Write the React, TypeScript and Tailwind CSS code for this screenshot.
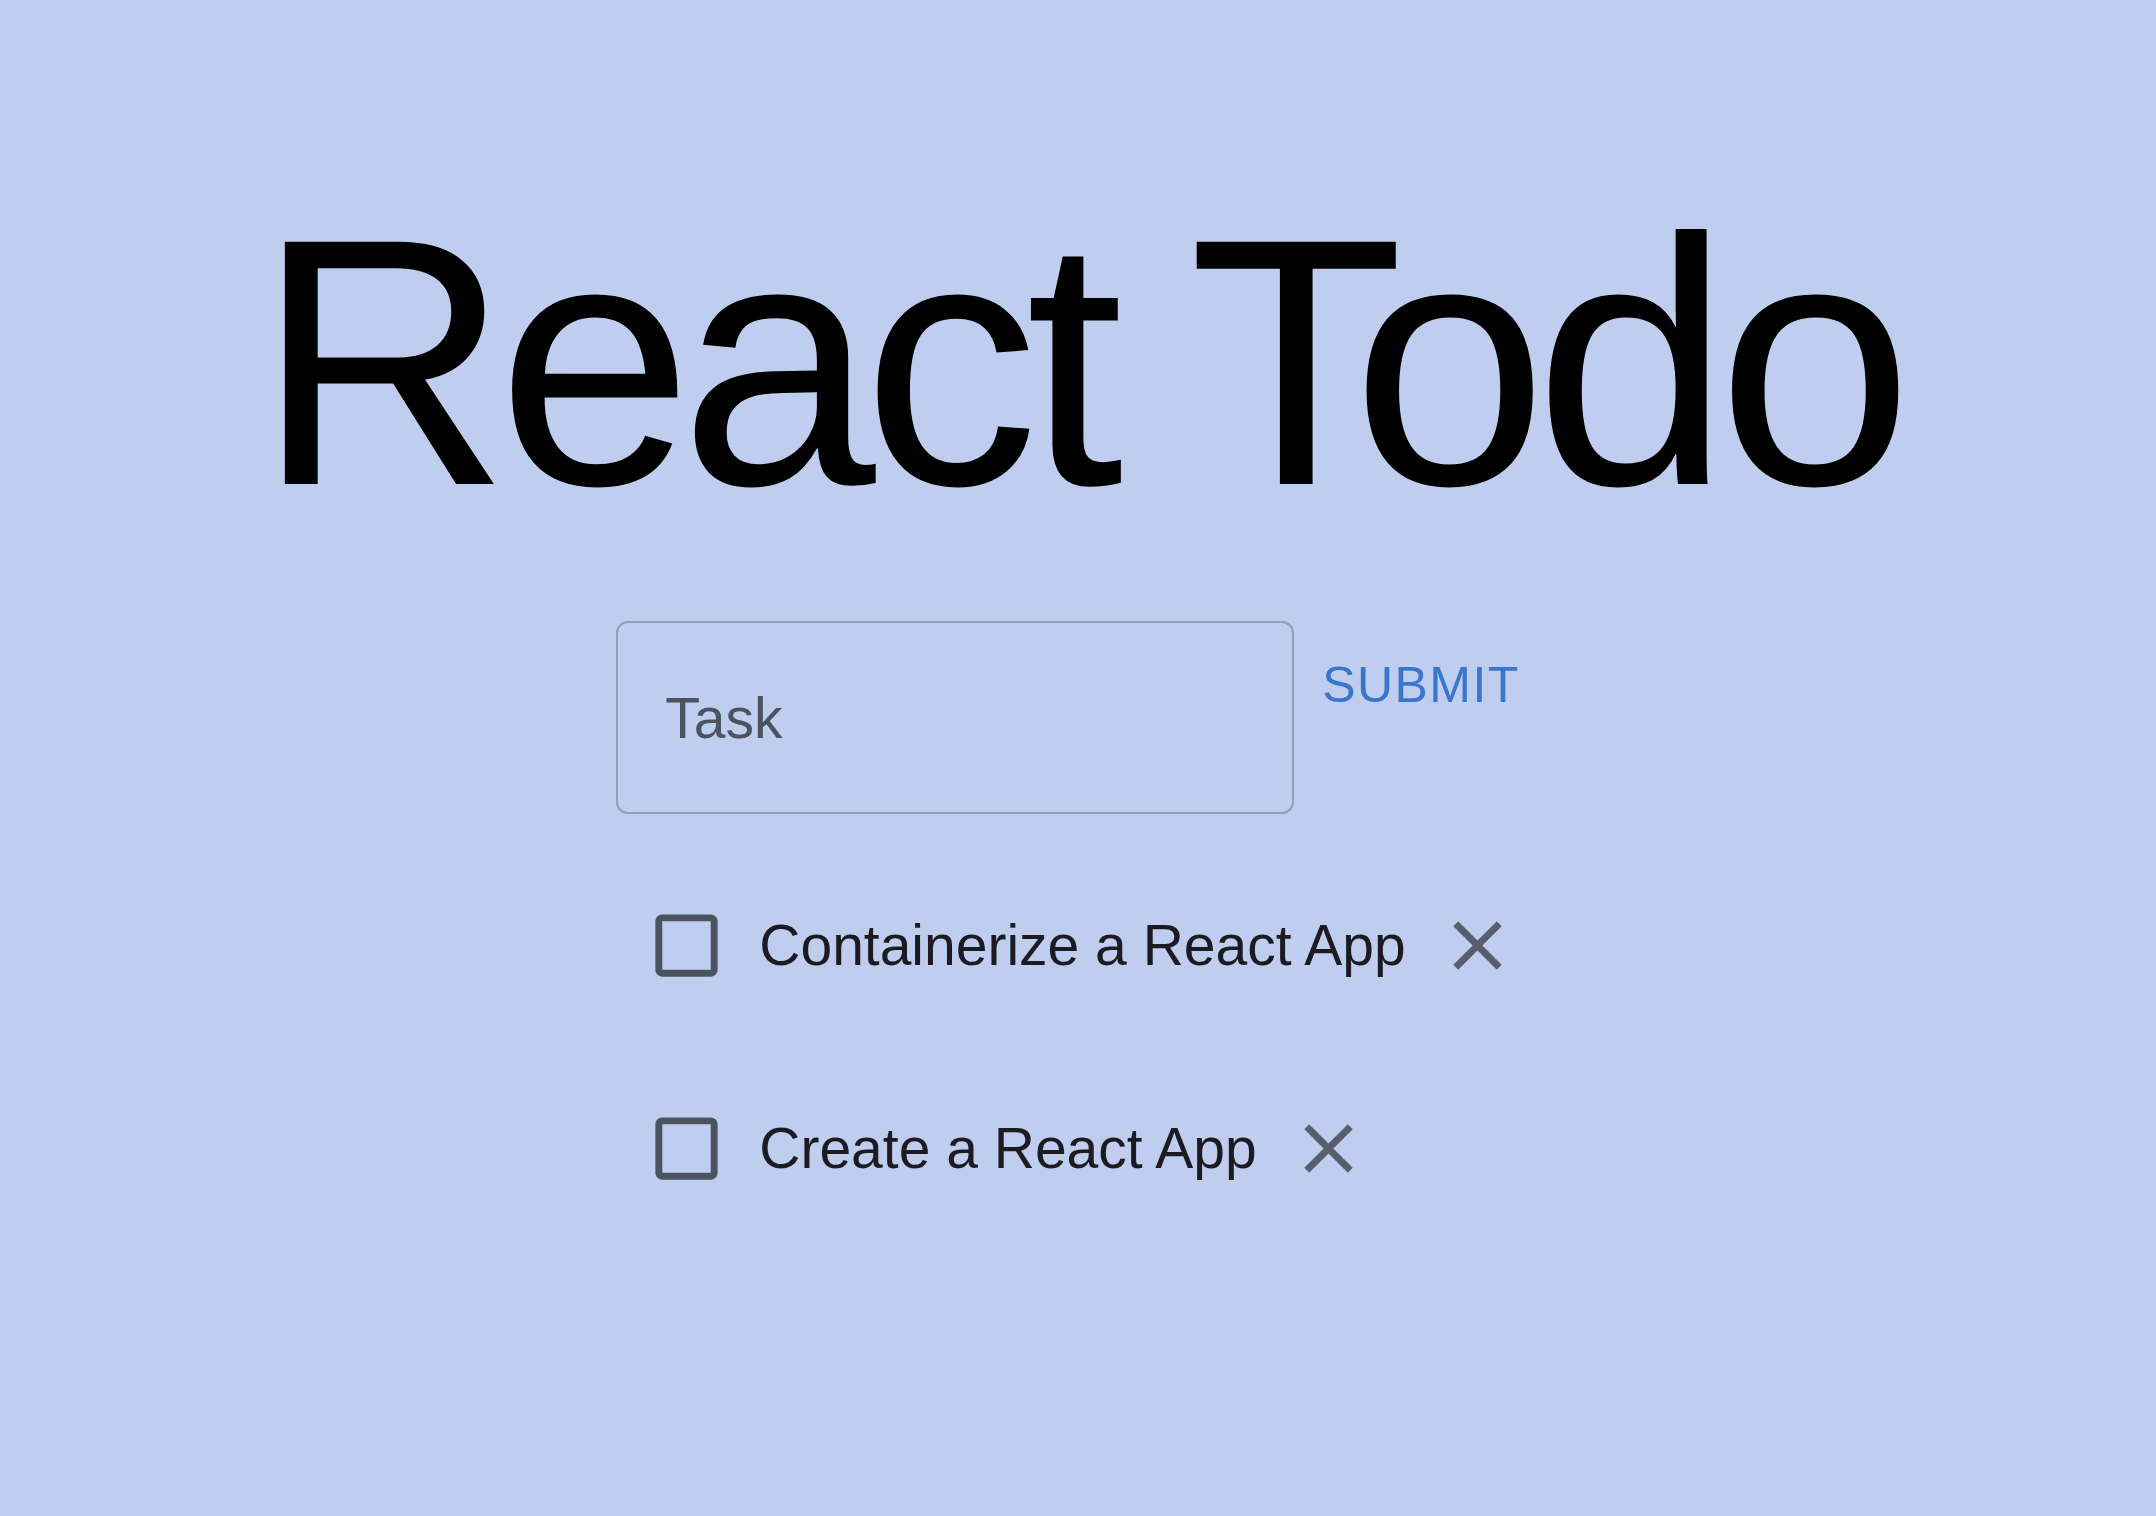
import { MdCheckBoxOutlineBlank, MdClose } from "react-icons/md";

export default function App() {
  const items = ["Containerize a React App", "Create a React App"];
  return (
    <div className="min-h-screen w-full bg-[#bfcdef] flex flex-col items-center font-['Liberation_Sans',Arial,Helvetica,sans-serif]">
      <h1 className="mt-[186px] text-[352px] leading-none tracking-[-0.037em] text-black font-normal whitespace-nowrap">
        React Todo
      </h1>
      <div className="mt-[83px] pl-[8px] flex flex-col items-start">
        <form className="flex items-start" onSubmit={(e) => e.preventDefault()}>
          <input
            type="text"
            placeholder="Task"
            className="w-[678px] h-[193px] rounded-[12px] border-2 border-[#939eb8] bg-transparent pl-[47px] text-[57px] text-[#1c1b22] placeholder:text-[#4c5260] outline-none"
          />
          <button
            type="submit"
            className="px-[28px] py-[21px] text-[50px] leading-[1.75] tracking-[0.02857em] text-[#3a77cc] uppercase font-normal"
          >
            Submit
          </button>
        </form>
        <ul className="mt-[30px] flex flex-col">
          {items.map((t) => (
            <li key={t} className="flex items-center py-[29px]">
              <span className="flex py-[31px] pl-[29px] pr-[31px]">
                <MdCheckBoxOutlineBlank size={83} className="text-[#4c5260]" />
              </span>
              <span className="text-[57px] leading-[1.5] text-[#1c1b22] whitespace-nowrap">{t}</span>
              <button type="button" className="ml-[30px] flex">
                <MdClose size={83} className="text-[#585e6e]" />
              </button>
            </li>
          ))}
        </ul>
      </div>
    </div>
  );
}
